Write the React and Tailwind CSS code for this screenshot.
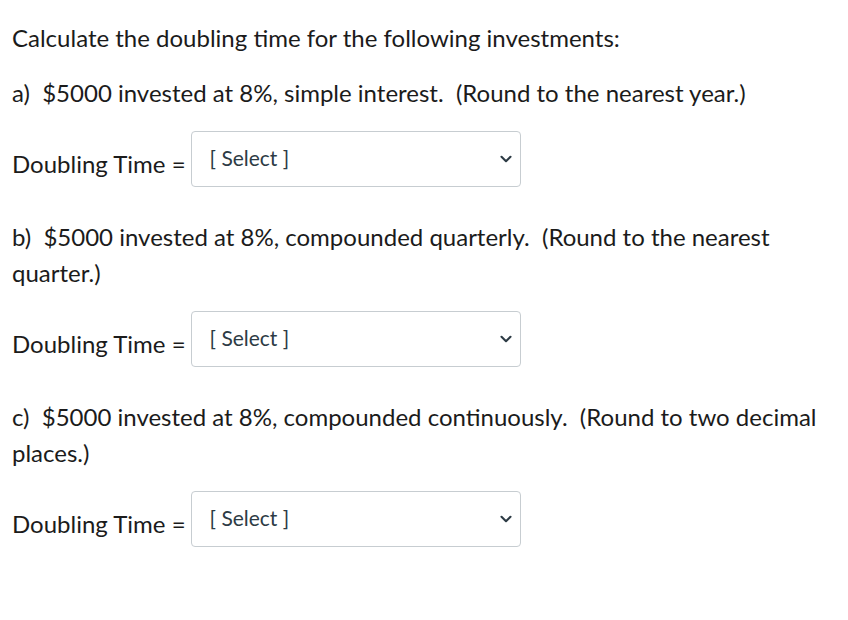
import { ChevronDown } from "lucide-react"

function SelectRow() {
  return (
    <div className="flex items-center h-[56px]">
      <span className="mr-[5px] pt-[10px]">Doubling Time =</span>
      <div className="w-[330px] h-[56px] border border-[#c7cdd1] rounded-[4px] bg-white flex items-center justify-between pl-[18px] pr-[5px]">
        <span className="text-[21px] text-[#2d3b45] -mt-[3px]">[ Select ]</span>
        <ChevronDown className="w-[18px] h-[18px] text-[#2d3b45]" strokeWidth={2.8} />
      </div>
    </div>
  )
}

export default function App() {
  return (
    <div className="w-[848px] h-[620px] bg-white text-[#1b1b1b] text-[24px] leading-[36px] pl-[12px] pr-[20px] pt-[20px]" style={{ fontFamily: "Lato, sans-serif" }}>
      <p>Calculate the doubling time for the following investments:</p>
      <p className="mt-[19px]">a)&nbsp; $5000 invested at 8%, simple interest.&nbsp; (Round to the nearest year.)</p>
      <div className="mt-[20px]">
        <SelectRow />
      </div>
      <p className="mt-[32px]">b)&nbsp; $5000 invested at 8%, compounded quarterly.&nbsp; (Round to the nearest quarter.)</p>
      <div className="mt-[20px]">
        <SelectRow />
      </div>
      <p className="mt-[32px]">c)&nbsp; $5000 invested at 8%, compounded continuously.&nbsp; (Round to two decimal places.)</p>
      <div className="mt-[20px]">
        <SelectRow />
      </div>
    </div>
  )
}
